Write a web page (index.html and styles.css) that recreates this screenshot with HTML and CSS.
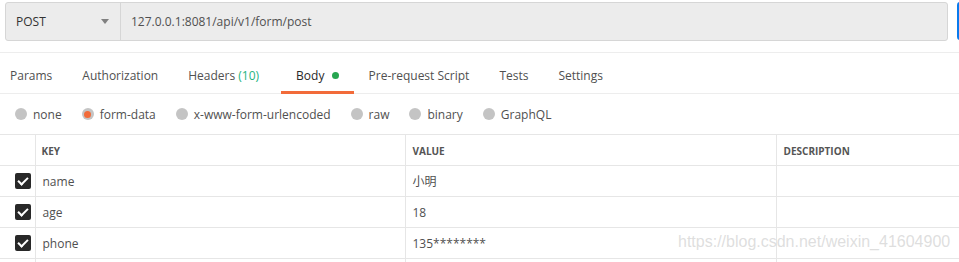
FILE: index.html
```html
<!DOCTYPE html>
<html lang="en">
<head>
<meta charset="UTF-8">
<title>POST form-data</title>
<link rel="stylesheet" href="styles.css">
</head>
<body>

<div class="urlbar">
    <div class="urlgroup">
        <div class="method">
            <span>POST</span>
            <span class="caret"></span>
        </div>
        <div class="url">127.0.0.1:8081/api/v1/form/post</div>
    </div>
    <div class="send"></div>
</div>

<div class="tabs">
    <div class="tab">Params</div>
    <div class="tab">Authorization</div>
    <div class="tab">Headers <span class="count">(10)</span></div>
    <div class="tab active">Body <span class="dot"></span></div>
    <div class="tab">Pre-request Script</div>
    <div class="tab">Tests</div>
    <div class="tab">Settings</div>
</div>

<div class="modes">
    <label class="mode"><span class="radio"></span>none</label>
    <label class="mode"><span class="radio on"></span>form-data</label>
    <label class="mode"><span class="radio"></span>x-www-form-urlencoded</label>
    <label class="mode"><span class="radio"></span>raw</label>
    <label class="mode"><span class="radio"></span>binary</label>
    <label class="mode"><span class="radio"></span>GraphQL</label>
</div>

<table class="params">
    <thead>
        <tr>
            <th class="chk"></th>
            <th class="key">KEY</th>
            <th class="val">VALUE</th>
            <th>DESCRIPTION</th>
        </tr>
    </thead>
    <tbody>
        <tr>
            <td class="chk"><span class="box"></span></td>
            <td>name</td>
            <td>小明</td>
            <td></td>
        </tr>
        <tr>
            <td class="chk"><span class="box"></span></td>
            <td>age</td>
            <td>18</td>
            <td></td>
        </tr>
        <tr>
            <td class="chk"><span class="box"></span></td>
            <td>phone</td>
            <td>135********</td>
            <td></td>
        </tr>
        <tr class="empty">
            <td class="chk"></td>
            <td></td>
            <td></td>
            <td></td>
        </tr>
    </tbody>
</table>

<div class="watermark">https://blog.csdn.net/weixin_41604900</div>

</body>
</html>
```

FILE: styles.css
```css
*{
    margin:0;
    padding:0;
    box-sizing:border-box;
}

body{
    background:white;
    font-family:"Open Sans","Noto Sans CJK SC",sans-serif;
    font-size:12px;
    color:#505050;
    width:959px;
    height:262px;
    overflow:hidden;
    position:relative;
}

.urlbar{
    display:flex;
    padding:2px 0 0 5px;
    height:53px;
    border-bottom:1px solid #ededed;
}

.urlgroup{
    display:flex;
    flex-shrink:0;
    width:943px;
    height:39px;
    background:#ececec;
    border:1px solid #d6d6d6;
    border-radius:3px;
}

.method{
    width:115px;
    display:flex;
    align-items:center;
    justify-content:space-between;
    padding:0 11px 0 10px;
    border-right:1px solid #d6d6d6;
    color:#333;
}

.caret{
    width:0;
    height:0;
    border-left:4px solid transparent;
    border-right:4px solid transparent;
    border-top:5px solid #808080;
}

.url{
    display:flex;
    align-items:center;
    padding-left:10px;
    color:#505050;
}

.send{
    flex-shrink:0;
    margin-left:9px;
    width:8px;
    height:38px;
    background:#097bed;
    border-radius:3px 0 0 3px;
}

.tabs{
    display:flex;
    height:41px;
    padding:4px 0 0 10px;
    border-bottom:1px solid #ededed;
}

.tab{
    display:flex;
    align-items:center;
    margin-right:30px;
    white-space:pre;
    color:#505050;
    position:relative;
}

.tab.active{
    color:#282828;
    padding:0 15px;
    margin-left:-8px;
    margin-right:15px;
}

.tab.active::after{
    content:"";
    position:absolute;
    left:0;
    right:0;
    bottom:-1px;
    height:3px;
    background:#f26b3a;
}

.count{
    color:#26b47f;
}

.dot{
    display:inline-block;
    width:7px;
    height:7px;
    border-radius:50%;
    background:#26a650;
    margin-left:4px;
}

.modes{
    display:flex;
    align-items:center;
    height:40px;
    padding-left:15px;
}

.mode{
    display:flex;
    align-items:center;
    margin-right:20px;
    color:#505050;
}

.radio{
    width:12px;
    height:12px;
    border-radius:50%;
    background:#c4c4c4;
    margin-right:6px;
    display:flex;
    align-items:center;
    justify-content:center;
}

.radio.on::after{
    content:"";
    width:7px;
    height:7px;
    border-radius:50%;
    background:#f26b3a;
}

.params{
    width:100%;
    border-collapse:collapse;
    table-layout:fixed;
}

.params th,.params td{
    height:31px;
    border-top:1px solid #e6e6e6;
    border-left:1px solid #e6e6e6;
    text-align:left;
    padding:0 7px;
    font-weight:normal;
}

.params th:first-child,.params td:first-child{
    border-left:none;
}

.params th{
    font-size:10px;
    font-weight:bold;
    color:#555;
    padding-top:1px;
}

.params .chk{
    width:35px;
    padding:0 0 0 15px;
}

.params th.key{
    width:370px;
    padding-left:6px;
}

.params th.val{
    width:371px;
}

.params .empty td{
    height:4px;
}

.box{
    display:block;
    width:16px;
    height:16px;
    border-radius:2px;
    background:#282828;
    position:relative;
}

.box::after{
    content:"";
    position:absolute;
    left:5px;
    top:2px;
    width:4px;
    height:8px;
    border-right:2px solid white;
    border-bottom:2px solid white;
    transform:rotate(45deg);
}

.watermark{
    position:absolute;
    left:678px;
    top:233px;
    font-family:"Liberation Sans",Arial,sans-serif;
    font-size:16px;
    color:rgba(200,200,200,.6);
}
```
